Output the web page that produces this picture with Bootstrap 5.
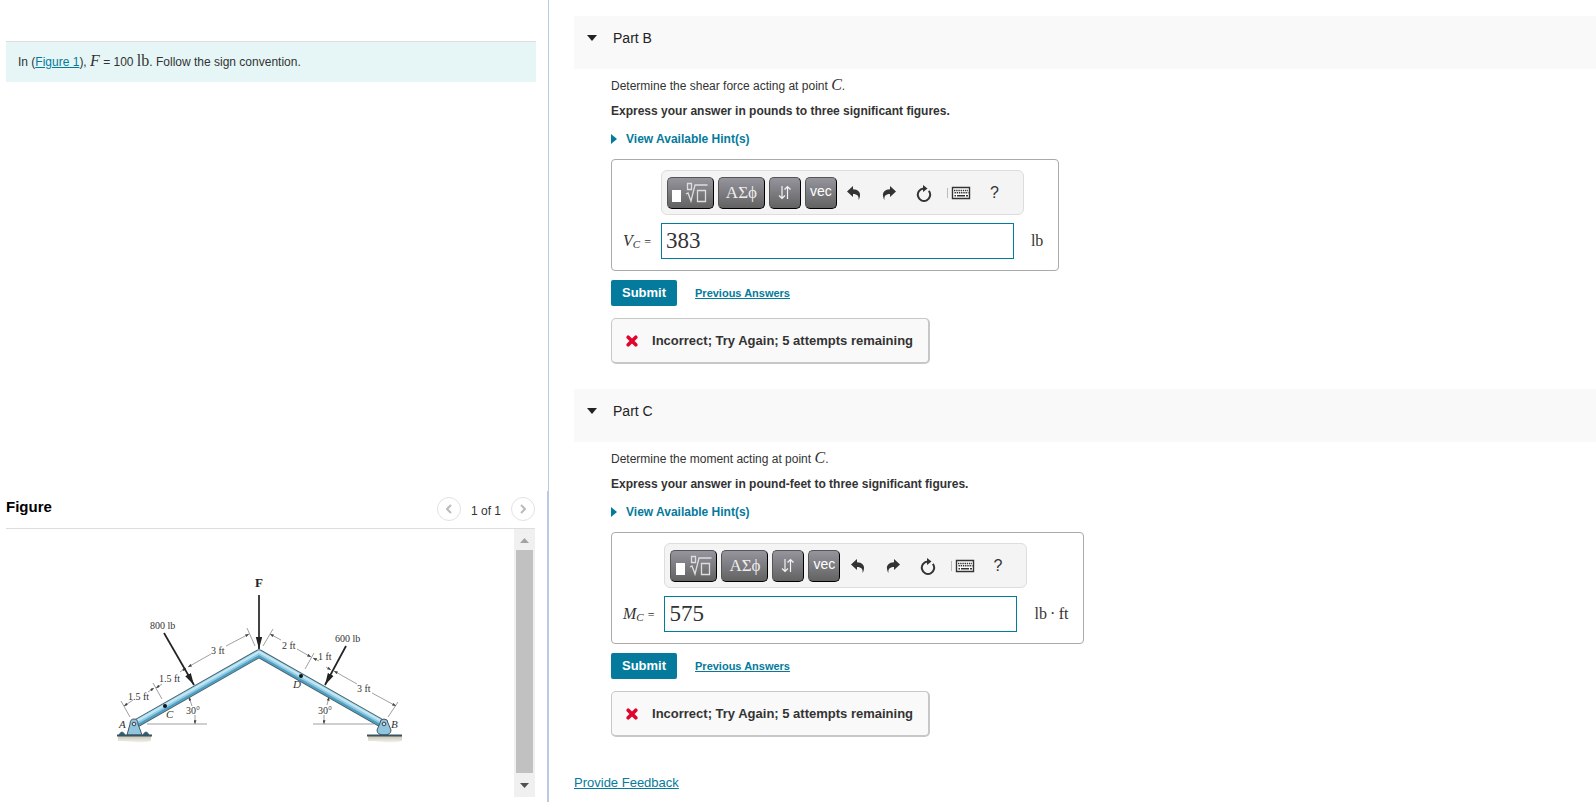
<!DOCTYPE html>
<html lang="en">
<head>
<meta charset="utf-8">
<meta name="viewport" content="width=device-width, initial-scale=1">
<title>Shear force and moment</title>
<link href="https://cdn.jsdelivr.net/npm/bootstrap@5.3.0/dist/css/bootstrap.min.css" rel="stylesheet">
<style>
  :root { --teal: #047a9c; --rule: #ddd; --divider: #b9cbe0; }
  body { font: 12px/18px "Liberation Sans", Arial, sans-serif; color: #333; background: #fff; }
  a { color: var(--teal); }
  .math { font-family: "Liberation Serif", "Times New Roman", serif; font-size: 16px; line-height: 16px; }
  .side-pane { flex: 0 0 34.4%; min-width: 0; }
  .prompt-wrap { border-right: 1px solid var(--divider); padding: 41px 12px 0 6px; }
  .prompt { background: #e6f6f6; border-top: 1px solid var(--rule); padding: 11px 12px; }
  .figure-wrap { border-right: 2px solid var(--divider); padding: 0 12px 5px 6px; }
  .figure-head { height: 38px; border-bottom: 1px solid var(--rule); }
  .figure-head h2 { font-size: 15px; line-height: 18px; color: #000; padding-top: 7px; }
  .pager-row { gap: 10px; padding-bottom: 2px; }
  .pager { width: 24px; height: 24px; border: 1px solid #e2e2e2; border-radius: 50%; background: #fff; color: #bbb; }
  .viewport { height: 268px; }
  .scroll-track { width: 21px; background: #f0f0f0; color: #505050; padding: 9px 2px; }
  .scroll-thumb { background: #c1c1c1; margin: 7px 0 10px; }
  .main-pane { padding: 16px 0 0 25px; }
  .part-head { height: 53px; background: #f9f9f9; padding: 12px 12px 0 13px; gap: 16px; color: #222; }
  .part-head h2 { font-size: 14px; line-height: 20px; }
  .part-body { padding: 8px 0 0 37px; }
  .express { margin-top: 7px; }
  .hint { color: var(--teal); gap: 9px; margin: 10px 0 11px; }
  .answer { display: grid; grid-template-columns: auto auto auto; width: fit-content; align-items: center;
            border: 1px solid #aaa; border-radius: 4px; padding: 10px 15px 11px 11px; row-gap: 8px; }
  .toolbar { grid-column: 2 / 4; width: 363px; height: 45px; background: #f4f4f4; border: 1px solid #ddd;
             border-radius: 6px; padding: 0 5px; color: #333; }
  .key { width: 47px; height: 32px; border: 1px solid #000; border-top-color: #555; border-left-color: #555; border-radius: 5px;
         background: linear-gradient(#96949d, #626262); color: #fff; margin-right: 4px; flex-shrink: 0; }
  .key-sm { width: 32px; }
  .greek { font: 17px/20px "Liberation Serif", serif; color: #eee; }
  .vec { font-size: 14px; line-height: 16px; padding-bottom: 3px; margin-right: 0; }
  .tool { background: none; border: 0; color: #333; width: 35px; height: 32px; flex-shrink: 0; }
  .answer-label { padding-right: 10px; }
  .answer-label sub { font-size: 11px; bottom: -2px; }
  .eq { font-size: 12px; }
  .answer-input { width: 353px; height: 36px; border: 1px solid var(--teal); border-radius: 0; padding: 0 4px;
                  font: 23px/30px "Liberation Serif", serif; color: #333; }
  .unit { padding-left: 17px; }
  .actions { margin-top: 9px; gap: 18px; }
  .submit { background: var(--teal); color: #fff; font-size: 13px; line-height: 18px; font-weight: 700; border: 0; border-radius: 2px; width: 66px; height: 26px; }
  .previous { font-size: 11px; font-weight: 700; }
  .verdict { width: 319px; height: 46px; margin: 12px 0 25px; border: 1px solid #c7c7c7; border-right-width: 2px; border-bottom-width: 2px;
             border-radius: 5px; background: #f9f9f9; padding: 1px 0 0 14px; gap: 14px; font-size: 13px; font-weight: 700; }
  .feedback { font-size: 13px; margin-top: 12px; }
</style>
</head>
<body>
<svg class="d-none" aria-hidden="true">
  <symbol id="i-root" viewBox="0 0 36 22">
    <path d="M0 8h9v12H0z" fill="#fff"/>
    <path d="M15.500 1.500h4v6h-4zM14 12l2-1 3 8 4-16h12.500M25.500 8.500h8v11h-8z" fill="none" stroke="#ddd" stroke-width="1.300"/>
  </symbol>
  <symbol id="i-updown" viewBox="0 0 14 16">
    <path d="M4 1v12M1 10.500l3 3 3-3M9.500 14V2M6.500 4.500l3-3 3 3" fill="none" stroke="#f4f4f4" stroke-width="1.200"/>
  </symbol>
  <symbol id="i-undo" viewBox="0 0 14 15">
    <path d="M0 5.500L6 0v3.200c5 0 7.500 3.300 7 6.300-.2 2-.8 3.500-1.500 4.500.6-3.800-1-6-5.500-6V11z" fill="currentColor"/>
  </symbol>
  <symbol id="i-redo" viewBox="0 0 14 15">
    <path d="M14 5.500L8 0v3.200C3 3.200.5 6.500 1 9.500c.2 2 .8 3.500 1.500 4.500C1.900 10.200 3.500 8 8 8v3z" fill="currentColor"/>
  </symbol>
  <symbol id="i-reset" viewBox="0 0 16 17">
    <path d="M8 3.500A6.200 6.200 0 1 0 12.800 5.800" fill="none" stroke="currentColor" stroke-width="2"/>
    <path d="M7 0l4.500 3.500L7 7z" fill="currentColor"/>
  </symbol>
  <symbol id="i-keyboard" viewBox="0 0 24 14">
    <path d="M.5 2v10" stroke="#bbb"/>
    <path d="M5.500 1.500h17v11h-17z" fill="#fff" stroke="currentColor" stroke-width="1.400"/>
    <path d="M7 4.500h14M7.500 6.800h14" stroke="currentColor" stroke-width="1.500" stroke-dasharray="1.400 .8"/>
    <path d="M7.500 9.800h1.500m1 0h8m1 0h2" stroke="currentColor" stroke-width="1.500"/>
  </symbol>
  <symbol id="i-wrong" viewBox="0 0 12 12">
    <path d="M2.200 2.200l7.600 7.600M9.800 2.200L2.200 9.800" stroke="#e1042c" stroke-width="3.600" stroke-linecap="round"/>
  </symbol>
  <symbol id="i-down" viewBox="0 0 10 6"><path d="M0 0h10L5 6z" fill="currentColor"/></symbol>
  <symbol id="i-right" viewBox="0 0 6 10"><path d="M0 0l6 5-6 5z" fill="currentColor"/></symbol>
</svg>

<div class="d-flex min-vh-100">
  <aside class="side-pane d-flex flex-column">
    <div class="prompt-wrap flex-grow-1">
      <div class="prompt">In (<a href="#figure">Figure 1</a>), <i class="math">F</i> = 100 <span class="math">lb</span>. Follow the sign convention.</div>
    </div>
    <section class="figure-wrap" id="figure">
      <div class="figure-head d-flex justify-content-between">
        <h2 class="fw-bold mb-0">Figure</h2>
        <div class="pager-row d-flex align-items-center">
          <button class="pager p-0 d-flex align-items-center justify-content-center" aria-label="Previous figure"><svg width="6" height="10"><path d="M5 1L1 5l4 4" fill="none" stroke="currentColor" stroke-width="2"/></svg></button>
          <span class="pt-1">1 of 1</span>
          <button class="pager p-0 d-flex align-items-center justify-content-center" aria-label="Next figure"><svg width="6" height="10"><path d="M1 1l4 4-4 4" fill="none" stroke="currentColor" stroke-width="2"/></svg></button>
        </div>
      </div>
      <div class="viewport d-flex">
        <div class="flex-grow-1 overflow-hidden">
          <svg class="d-block" width="508" height="268" viewBox="6 529 508 268" role="img" aria-label="Bent beam with supports A and B" font-family="Liberation Serif, serif" font-size="10" fill="#333">
            <defs>
              <linearGradient id="plate" x1="0" x2="0" y1="0" y2="1"><stop offset="0" stop-color="#c9c5b4"/><stop offset="1" stop-color="#f4f2ea"/></linearGradient>
              <marker id="head" viewBox="0 0 12 8" refX="12" refY="4" markerWidth="12" markerHeight="8" markerUnits="userSpaceOnUse" orient="auto"><path d="M0 0.800L12 4 0 7.200z" fill="#222"/></marker>
              <marker id="tip" viewBox="0 0 5 4" refX="5" refY="2" markerWidth="4" markerHeight="3" markerUnits="userSpaceOnUse" orient="auto-start-reverse"><path d="M0 0l5 2-5 2z" fill="#444"/></marker>
            </defs>
            <!-- beam -->
            <g fill="none" stroke-linejoin="round">
              <path d="M137 723l122-69.500L381 723" stroke="#4c5a62" stroke-width="8.500"/>
              <path d="M137 723l122-69.500L381 723" stroke="#4d9fc1" stroke-width="7"/>
              <path d="M136.500 722L259 652.500 381.500 722" stroke="#8fcbe2" stroke-width="4.500"/>
              <path d="M136 721.500L259 651.800 382 721.500" stroke="#c4e6f2" stroke-width="2.200"/>
            </g>
            <!-- supports -->
            <path d="M118 736h33v5q-8 2-16 1t-17-1zM368 736h34v5q-8 2-17 1t-17-1z" fill="url(#plate)"/>
            <path d="M119 735q3-6 6 0M143 735q3-6 6 0" fill="#345d72" stroke="#345d72"/>
            <path d="M127 735l3-11q0-5 4-5t4 5l4 11z" fill="#8fc6de" stroke="#456"/>
            <path d="M380 723q0-4 4-4t4 4l3 7q0 5-7 5t-7-5z" fill="#8fc6de" stroke="#456"/>
            <path d="M117 735.500h35M367 735.500h35" stroke="#365462" stroke-width="2"/>
            <circle cx="134" cy="724" r="1.800" fill="#dde" stroke="#444"/><circle cx="384" cy="724" r="1.800" fill="#dde" stroke="#444"/>
            <!-- dimension lines -->
            <g fill="none" stroke="#777" stroke-width=".7">
              <path d="M121 701l9 16M153 683l9 16M247 628l8 18M273 629l-10 17M314 653l-9 16M398 702l-10 15"/>
              <path d="M147 724h60M313 724h61"/>
              <g marker-end="url(#tip)">
                <path d="M133 700l-9 6"/><path d="M148 692l6-4"/><path d="M162 684l-6 4"/><path d="M180 672l6-4"/><path d="M211 654l-23 13"/><path d="M226 646l23-12"/>
                <path d="M281 640l-11-6"/><path d="M297 649l14 8"/><path d="M319 661l-6-3"/><path d="M326 667l5 3"/><path d="M357 684l-23-13"/><path d="M372 693l24 13"/>
                <path d="M192 706l-3-9"/><path d="M195 715v9"/><path d="M327 705l2-8"/><path d="M324 715v9"/>
              </g>
            </g>
            <!-- loads -->
            <g stroke="#222" stroke-width="1.700">
              <path d="M259 595v54" marker-end="url(#head)"/><path d="M164 633l30 52" marker-end="url(#head)"/><path d="M346 646l-21 39" marker-end="url(#head)"/>
            </g>
            <circle cx="165" cy="706" r="2" fill="#111"/><circle cx="301" cy="676" r="2" fill="#111"/>
            <text x="255" y="587" font-size="13" font-weight="bold" fill="#222">F</text>
            <text x="150" y="629">800 lb</text><text x="335" y="642">600 lb</text>
            <text x="211" y="654">3 ft</text><text x="159" y="682">1.5 ft</text><text x="128" y="700">1.5 ft</text>
            <text x="282" y="649">2 ft</text><text x="318" y="660">1 ft</text><text x="357" y="692">3 ft</text>
            <text x="186" y="714">30°</text><text x="318" y="714">30°</text>
            <g font-style="italic" font-size="11"><text x="119" y="728">A</text><text x="166" y="718">C</text><text x="293" y="688">D</text><text x="391" y="728">B</text></g>
          </svg>
        </div>
        <div class="scroll-track d-flex flex-column flex-shrink-0" aria-hidden="true">
          <svg class="align-self-center" width="9" height="5"><path d="M0 5h9L4.500 0z" fill="#a3a3a3"/></svg>
          <div class="scroll-thumb flex-grow-1"></div>
          <svg class="align-self-center" width="9" height="5"><path d="M0 0h9L4.500 5z" fill="currentColor"/></svg>
        </div>
      </div>
    </section>
  </aside>

  <main class="main-pane flex-grow-1">
    <section>
      <header class="part-head d-flex"><svg class="mt-1" width="10" height="12" viewBox="0 -3 10 12"><use href="#i-down" width="10" height="6"/></svg><h2 class="fw-normal mb-0">Part B</h2></header>
      <div class="part-body">
        <div>Determine the shear force acting at point <i class="math">C</i>.</div>
        <div class="express fw-bold">Express your answer in pounds to three significant figures.</div>
        <a class="hint fw-bold text-decoration-none d-flex align-items-center" href="#"><svg width="6" height="10"><use href="#i-right"/></svg>View Available Hint(s)</a>
        <div class="answer">
          <div class="toolbar d-flex align-items-center">
            <button class="key p-0" aria-label="Templates"><svg width="36" height="22"><use href="#i-root"/></svg></button>
            <button class="key p-0 greek">ΑΣϕ</button>
            <button class="key key-sm p-0" aria-label="Arrows"><svg width="14" height="16"><use href="#i-updown"/></svg></button>
            <button class="key key-sm px-0 pt-0 vec">vec</button>
            <button class="tool p-0" aria-label="Undo"><svg width="14" height="15"><use href="#i-undo"/></svg></button>
            <button class="tool p-0" aria-label="Redo"><svg width="14" height="15"><use href="#i-redo"/></svg></button>
            <button class="tool p-0" aria-label="Reset"><svg width="16" height="17"><use href="#i-reset"/></svg></button>
            <button class="tool p-0" aria-label="Keyboard"><svg width="24" height="14"><use href="#i-keyboard"/></svg></button>
            <button class="tool p-0 fs-6" aria-label="Help">?</button>
          </div>
          <label class="answer-label math" for="vc"><i>V<sub>C</sub></i> <span class="eq">=</span></label>
          <input class="answer-input" id="vc" type="text" value="383">
          <span class="unit math">lb</span>
        </div>
        <div class="actions d-flex align-items-center"><button class="submit p-0">Submit</button><a class="previous" href="#">Previous Answers</a></div>
        <div class="verdict d-flex align-items-center"><svg width="12" height="12"><use href="#i-wrong"/></svg>Incorrect; Try Again; 5 attempts remaining</div>
      </div>
    </section>
    <section>
      <header class="part-head d-flex"><svg class="mt-1" width="10" height="12" viewBox="0 -3 10 12"><use href="#i-down" width="10" height="6"/></svg><h2 class="fw-normal mb-0">Part C</h2></header>
      <div class="part-body">
        <div>Determine the moment acting at point <i class="math">C</i>.</div>
        <div class="express fw-bold">Express your answer in pound-feet to three significant figures.</div>
        <a class="hint fw-bold text-decoration-none d-flex align-items-center" href="#"><svg width="6" height="10"><use href="#i-right"/></svg>View Available Hint(s)</a>
        <div class="answer">
          <div class="toolbar d-flex align-items-center">
            <button class="key p-0" aria-label="Templates"><svg width="36" height="22"><use href="#i-root"/></svg></button>
            <button class="key p-0 greek">ΑΣϕ</button>
            <button class="key key-sm p-0" aria-label="Arrows"><svg width="14" height="16"><use href="#i-updown"/></svg></button>
            <button class="key key-sm px-0 pt-0 vec">vec</button>
            <button class="tool p-0" aria-label="Undo"><svg width="14" height="15"><use href="#i-undo"/></svg></button>
            <button class="tool p-0" aria-label="Redo"><svg width="14" height="15"><use href="#i-redo"/></svg></button>
            <button class="tool p-0" aria-label="Reset"><svg width="16" height="17"><use href="#i-reset"/></svg></button>
            <button class="tool p-0" aria-label="Keyboard"><svg width="24" height="14"><use href="#i-keyboard"/></svg></button>
            <button class="tool p-0 fs-6" aria-label="Help">?</button>
          </div>
          <label class="answer-label math" for="mc"><i>M<sub>C</sub></i> <span class="eq">=</span></label>
          <input class="answer-input" id="mc" type="text" value="575">
          <span class="unit math">lb&thinsp;·&thinsp;ft</span>
        </div>
        <div class="actions d-flex align-items-center"><button class="submit p-0">Submit</button><a class="previous" href="#">Previous Answers</a></div>
        <div class="verdict d-flex align-items-center"><svg width="12" height="12"><use href="#i-wrong"/></svg>Incorrect; Try Again; 5 attempts remaining</div>
      </div>
    </section>
    <a class="feedback d-inline-block" href="#">Provide Feedback</a>
  </main>
</div>
<script src="https://cdn.jsdelivr.net/npm/bootstrap@5.3.0/dist/js/bootstrap.bundle.min.js"></script>
</body>
</html>
